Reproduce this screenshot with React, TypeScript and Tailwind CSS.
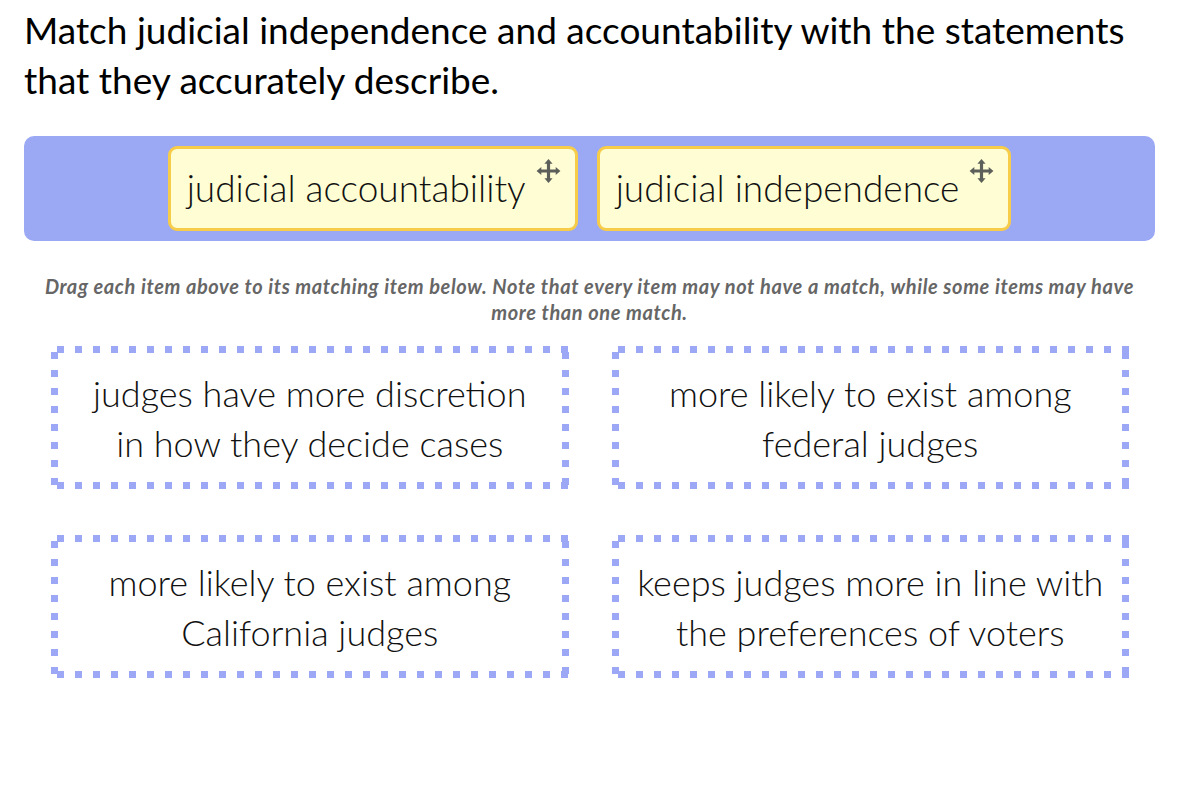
import React from "react";

const choices = ["judicial accountability", "judicial independence"];

const targets = [
  ["judges have more discretion", "in how they decide cases"],
  ["more likely to exist among", "federal judges"],
  ["more likely to exist among", "California judges"],
  ["keeps judges more in line with", "the preferences of voters"],
];

// little four-way arrow shown on each draggable chip
const MoveIcon = () => (
  <svg width="25" height="26" viewBox="0 0 22 22" className="shrink-0">
    <g fill="#5c5f5a" stroke="#5c5f5a">
      <path d="M11 3v16M3 11h16" strokeWidth="2.8" />
      <path d="M11 0.5l3.6 4.2h-7.2z" stroke="none" />
      <path d="M11 21.5l3.6-4.2h-7.2z" stroke="none" />
      <path d="M0.5 11l4.2-3.6v7.2z" stroke="none" />
      <path d="M21.5 11l-4.2-3.6v7.2z" stroke="none" />
    </g>
  </svg>
);

const Chip = ({ label }: { label: string }) => (
  <div className="h-[85px] flex items-start gap-[10px] pl-4 pr-[14px] rounded-[9px] border-[3px] border-[#f6cc48] bg-[#fefdd3] cursor-move">
    <span className="mt-[16px] text-[37px] leading-[46px] font-light text-[#111]">{label}</span>
    <span className="mt-[9px]">
      <MoveIcon />
    </span>
  </div>
);

const DropBox = ({ lines }: { lines: string[] }) => (
  <div className="h-[143px] flex flex-col items-center justify-center text-center bg-[linear-gradient(90deg,#9ca8f6_7px,transparent_7px),linear-gradient(90deg,#9ca8f6_7px,transparent_7px),linear-gradient(#9ca8f6_7px,transparent_7px),linear-gradient(#9ca8f6_7px,transparent_7px)] bg-[size:18px_7px,18px_7px,7px_18px,7px_18px] bg-[position:6px_0,6px_100%,0_6px,100%_6px] [background-repeat:repeat-x,repeat-x,repeat-y,repeat-y]">
    {lines.map((l, i) => (
      <span key={i} className="text-[36px] leading-[50px] font-light text-[#111]">
        {l}
      </span>
    ))}
  </div>
);

export default function App() {
  return (
    <div className="w-[1179px] h-[789px] bg-white font-['Lato','Liberation_Sans',sans-serif] text-black">
      <h1 className="w-[1150px] pl-6 pt-[5px] text-[37px] leading-[50px] font-normal">
        Match judicial independence and accountability with the statements that they accurately describe.
      </h1>

      <div className="mx-6 mt-[31px] h-[105px] rounded-[10px] bg-[#9ba9f5] flex items-center justify-center gap-[19px]">
        {choices.map((c) => (
          <Chip key={c} label={c} />
        ))}
      </div>

      <p className="mt-[32px] px-[36px] text-center text-[20px] leading-[26px] tracking-[0.6px] font-bold italic text-[#666]">
        Drag each item above to its matching item below. Note that every item may not have a match, while some items may have more than one match.
      </p>

      <div className="mt-[21px] ml-[51px] w-[1078px] grid grid-cols-2 gap-x-[43px] gap-y-[46px]">
        {targets.map((t, i) => (
          <DropBox key={i} lines={t} />
        ))}
      </div>
    </div>
  );
}
